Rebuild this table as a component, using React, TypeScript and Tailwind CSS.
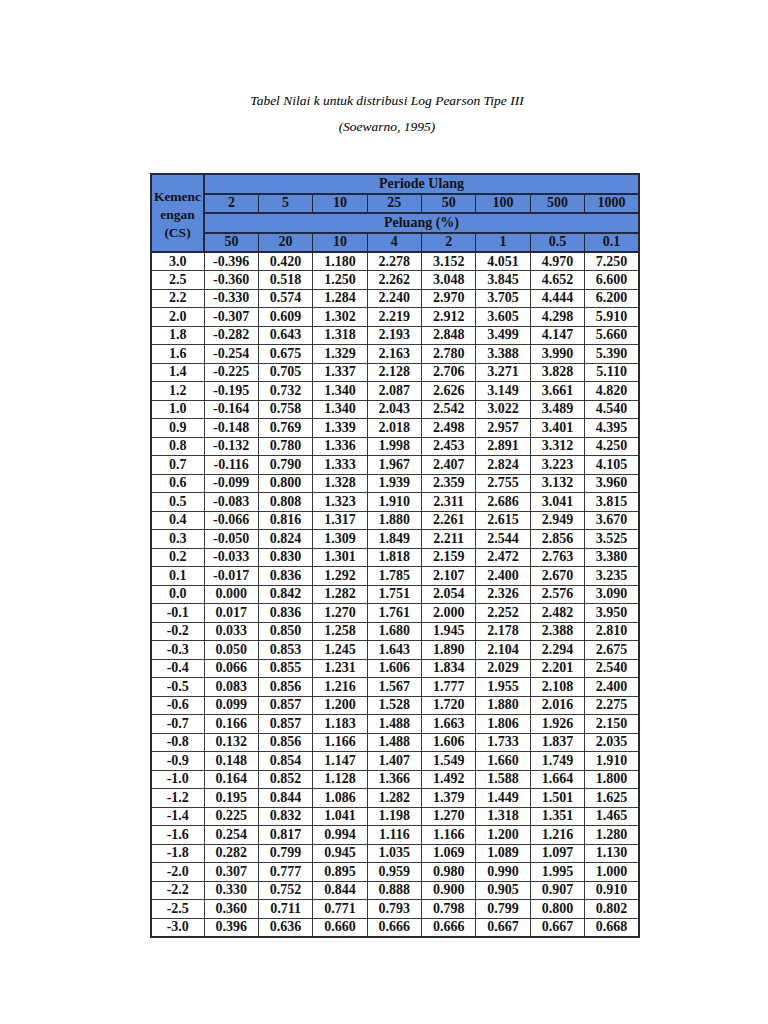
import React from 'react';

const rows: [string, string[]][] = [
  ['3.0', ['-0.396', '0.420', '1.180', '2.278', '3.152', '4.051', '4.970', '7.250']],
  ['2.5', ['-0.360', '0.518', '1.250', '2.262', '3.048', '3.845', '4.652', '6.600']],
  ['2.2', ['-0.330', '0.574', '1.284', '2.240', '2.970', '3.705', '4.444', '6.200']],
  ['2.0', ['-0.307', '0.609', '1.302', '2.219', '2.912', '3.605', '4.298', '5.910']],
  ['1.8', ['-0.282', '0.643', '1.318', '2.193', '2.848', '3.499', '4.147', '5.660']],
  ['1.6', ['-0.254', '0.675', '1.329', '2.163', '2.780', '3.388', '3.990', '5.390']],
  ['1.4', ['-0.225', '0.705', '1.337', '2.128', '2.706', '3.271', '3.828', '5.110']],
  ['1.2', ['-0.195', '0.732', '1.340', '2.087', '2.626', '3.149', '3.661', '4.820']],
  ['1.0', ['-0.164', '0.758', '1.340', '2.043', '2.542', '3.022', '3.489', '4.540']],
  ['0.9', ['-0.148', '0.769', '1.339', '2.018', '2.498', '2.957', '3.401', '4.395']],
  ['0.8', ['-0.132', '0.780', '1.336', '1.998', '2.453', '2.891', '3.312', '4.250']],
  ['0.7', ['-0.116', '0.790', '1.333', '1.967', '2.407', '2.824', '3.223', '4.105']],
  ['0.6', ['-0.099', '0.800', '1.328', '1.939', '2.359', '2.755', '3.132', '3.960']],
  ['0.5', ['-0.083', '0.808', '1.323', '1.910', '2.311', '2.686', '3.041', '3.815']],
  ['0.4', ['-0.066', '0.816', '1.317', '1.880', '2.261', '2.615', '2.949', '3.670']],
  ['0.3', ['-0.050', '0.824', '1.309', '1.849', '2.211', '2.544', '2.856', '3.525']],
  ['0.2', ['-0.033', '0.830', '1.301', '1.818', '2.159', '2.472', '2.763', '3.380']],
  ['0.1', ['-0.017', '0.836', '1.292', '1.785', '2.107', '2.400', '2.670', '3.235']],
  ['0.0', ['0.000', '0.842', '1.282', '1.751', '2.054', '2.326', '2.576', '3.090']],
  ['-0.1', ['0.017', '0.836', '1.270', '1.761', '2.000', '2.252', '2.482', '3.950']],
  ['-0.2', ['0.033', '0.850', '1.258', '1.680', '1.945', '2.178', '2.388', '2.810']],
  ['-0.3', ['0.050', '0.853', '1.245', '1.643', '1.890', '2.104', '2.294', '2.675']],
  ['-0.4', ['0.066', '0.855', '1.231', '1.606', '1.834', '2.029', '2.201', '2.540']],
  ['-0.5', ['0.083', '0.856', '1.216', '1.567', '1.777', '1.955', '2.108', '2.400']],
  ['-0.6', ['0.099', '0.857', '1.200', '1.528', '1.720', '1.880', '2.016', '2.275']],
  ['-0.7', ['0.166', '0.857', '1.183', '1.488', '1.663', '1.806', '1.926', '2.150']],
  ['-0.8', ['0.132', '0.856', '1.166', '1.488', '1.606', '1.733', '1.837', '2.035']],
  ['-0.9', ['0.148', '0.854', '1.147', '1.407', '1.549', '1.660', '1.749', '1.910']],
  ['-1.0', ['0.164', '0.852', '1.128', '1.366', '1.492', '1.588', '1.664', '1.800']],
  ['-1.2', ['0.195', '0.844', '1.086', '1.282', '1.379', '1.449', '1.501', '1.625']],
  ['-1.4', ['0.225', '0.832', '1.041', '1.198', '1.270', '1.318', '1.351', '1.465']],
  ['-1.6', ['0.254', '0.817', '0.994', '1.116', '1.166', '1.200', '1.216', '1.280']],
  ['-1.8', ['0.282', '0.799', '0.945', '1.035', '1.069', '1.089', '1.097', '1.130']],
  ['-2.0', ['0.307', '0.777', '0.895', '0.959', '0.980', '0.990', '1.995', '1.000']],
  ['-2.2', ['0.330', '0.752', '0.844', '0.888', '0.900', '0.905', '0.907', '0.910']],
  ['-2.5', ['0.360', '0.711', '0.771', '0.793', '0.798', '0.799', '0.800', '0.802']],
  ['-3.0', ['0.396', '0.636', '0.660', '0.666', '0.666', '0.667', '0.667', '0.668']],
];

const periods = ['2', '5', '10', '25', '50', '100', '500', '1000'];
const chances = ['50', '20', '10', '4', '2', '1', '0.5', '0.1'];

export default function App() {
  return (
    <div className="min-h-screen bg-white text-[#141414] font-['Liberation_Serif','Times_New_Roman',serif]">
      {/* Title */}
      <div className="pt-[88px] pl-[6px] text-center italic text-[13.5px] leading-[26px] text-black">
        <p>Tabel Nilai k untuk distribusi Log Pearson Tipe III</p>
        <p>(Soewarno, 1995)</p>
      </div>

      {/* Table */}
      <table className="mt-[33px] ml-[150px] w-[490px] table-fixed border-collapse border-2 border-[#2a2a2a] text-[14px] font-bold text-center">
        <colgroup>
          <col className="w-[53px]" />
          {periods.map((p) => (
            <col key={p} />
          ))}
        </colgroup>
        <thead className="bg-[#5b88d8]">
          <tr className="h-[19.5px]">
            <th rowSpan={4} className="border-2 border-[#24283a] text-[13.5px] leading-[18px] font-bold pt-[3px]">
              Kemenc
              <br />
              engan
              <br />
              (CS)
            </th>
            <th colSpan={8} className="border-2 border-[#24283a] leading-[16px] font-bold">
              Periode Ulang
            </th>
          </tr>
          <tr className="h-[19.5px]">
            {periods.map((p) => (
              <th key={p} className="border-x border-b-2 border-[#24283a] leading-[16px] font-bold">
                {p}
              </th>
            ))}
          </tr>
          <tr className="h-[19.5px]">
            <th colSpan={8} className="border-2 border-[#24283a] leading-[16px] font-bold">
              Peluang (%)
            </th>
          </tr>
          <tr className="h-[19.5px]">
            {chances.map((c) => (
              <th key={c} className="border-x border-b-2 border-[#24283a] leading-[16px] font-bold">
                {c}
              </th>
            ))}
          </tr>
        </thead>
        <tbody>
          {rows.map(([cs, vals]) => (
            <tr key={cs} className="h-[18.5px]">
              <td className="border border-[#3a3a3a] leading-[16px] p-0">{cs}</td>
              {vals.map((v, i) => (
                <td key={i} className="border border-[#3a3a3a] leading-[16px] p-0">
                  {v}
                </td>
              ))}
            </tr>
          ))}
        </tbody>
      </table>
    </div>
  );
}
